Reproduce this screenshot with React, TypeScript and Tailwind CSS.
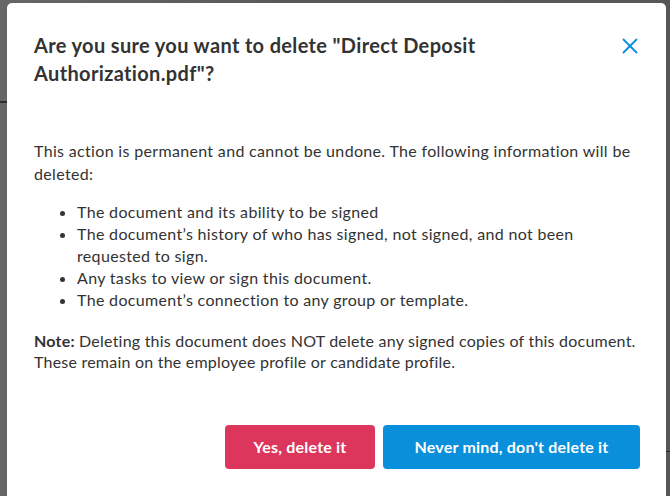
import { X } from "lucide-react";

const items = [
  "The document and its ability to be signed",
  "The document\u2019s history of who has signed, not signed, and not been requested to sign.",
  "Any tasks to view or sign this document.",
  "The document\u2019s connection to any group or template.",
];

export default function App() {
  return (
    <div
      className="relative h-[496px] w-[670px] overflow-hidden bg-gradient-to-r from-[#666] via-[#575757] to-[#575757] pl-[7px] pt-[3px]"
      style={{ fontFamily: "Lato, 'Noto Sans', sans-serif" }}
    >
      {/* background page bits behind the overlay */}
      <div className="absolute left-0 top-[101px] h-[2px] w-[7px] bg-[#2a2a2a]" />
      <div className="absolute right-0 top-[451px] h-[1px] w-[4px] bg-[#2a2a2a]" />

      <div className="flex h-[500px] w-[659px] flex-col rounded-[5px] bg-white pl-[27px] pr-[26px] pt-[28px] text-[#333] tracking-[0.33px]">
        <div className="flex items-start justify-between">
          <h2 className="w-[480px] text-[20px] font-bold leading-[28px] tracking-[0.35px] text-[#333]">
            Are you sure you want to delete "Direct Deposit Authorization.pdf"?
          </h2>
          <button className="-mr-[3px] mt-[2px] text-[#0a8fdb]">
            <X className="h-[26px] w-[26px]" strokeWidth={1.7} />
          </button>
        </div>

        <p className="mt-[52px] text-[16px] leading-[23px]">
          This action is permanent and cannot be undone. The following
          information will be deleted:
        </p>

        <ul className="mt-[16px] list-disc pl-[43px] text-[16px] leading-[22px]">
          {items.map((t) => (
            <li key={t}>{t}</li>
          ))}
        </ul>

        <p className="-mr-[4px] mt-[19px] text-[16px] leading-[21px] tracking-[0.22px]">
          <span className="font-bold">Note:</span> Deleting this document does
          NOT delete any signed copies of this document. These remain on the
          employee profile or candidate profile.
        </p>

        <div className="mt-[53px] flex justify-end gap-[8px] tracking-[0.2px]">
          <button className="h-[44px] w-[150px] rounded-[4px] bg-[#dc365c] text-[16px] font-bold text-white">
            Yes, delete it
          </button>
          <button className="h-[44px] w-[257px] rounded-[4px] bg-[#0a8fdb] text-[16px] font-bold text-white">
            Never mind, don't delete it
          </button>
        </div>
      </div>
    </div>
  );
}
